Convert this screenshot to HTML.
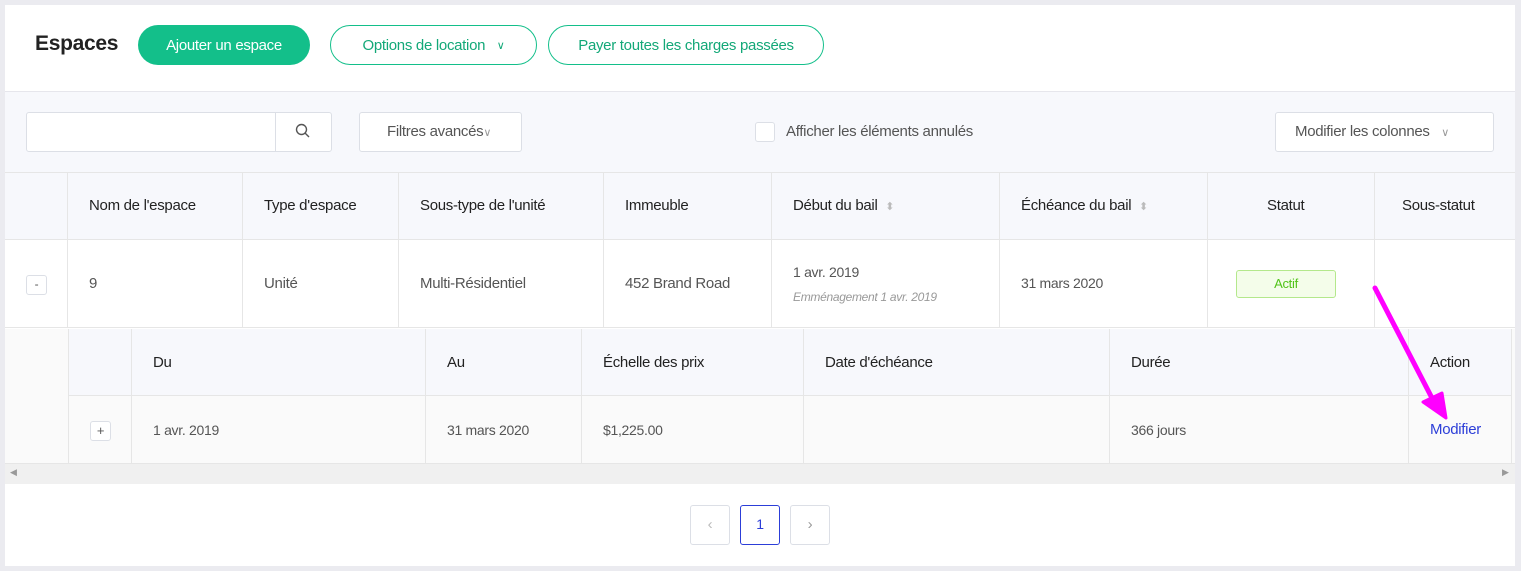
<!DOCTYPE html><html><head><meta charset="utf-8"><style>
*{box-sizing:border-box;margin:0;padding:0}
body{width:1521px;height:571px;background:#ebebf0;font-family:"Liberation Sans",sans-serif;position:relative;overflow:hidden;color:#333;font-size:15px;letter-spacing:-0.3px}
.a{position:absolute}
.card{left:5px;top:5px;width:1510px;height:561px;background:#fff}
.btn{position:absolute;height:40px;border-radius:20px;display:flex;align-items:center;justify-content:center;font-size:15px}
.gbtn{border:1px solid #13bf8a;color:#13a878;background:#fff}
.box{position:absolute;background:#fff;border:1px solid #dcdfe6;border-radius:3px}
.vl{position:absolute;width:1px;background:#e6e6e6}
.t{position:absolute;white-space:nowrap}
.h{color:#222;font-size:15px}
.c{color:#555;font-size:15px}
</style></head><body>
<div class="a card"></div>
<div class="t" style="left:35px;top:32px;font-size:21px;font-weight:bold;color:#222">Espaces</div>
<div class="btn" style="left:138px;top:25px;width:172px;background:#13bf8a;color:#fff">Ajouter un espace</div>
<div class="btn gbtn" style="left:330px;top:25px;width:207px">Options de location &nbsp;&nbsp;<span style="font-size:11px">∨</span></div>
<div class="btn gbtn" style="left:548px;top:25px;width:276px">Payer toutes les charges passées</div>
<div class="a" style="left:5px;top:91px;width:1510px;height:82px;background:#f7f8fc;border-top:1px solid #e6e6ec"></div>
<div class="box" style="left:26px;top:112px;width:250px;height:40px;border-radius:3px 0 0 3px"></div>
<div class="box" style="left:275px;top:112px;width:57px;height:40px;border-radius:0 3px 3px 0"></div>
<svg class="a" style="left:295px;top:123px" width="16" height="16"><circle cx="6.5" cy="6.5" r="5" fill="none" stroke="#555" stroke-width="1.4"/><line x1="10" y1="10" x2="14" y2="14" stroke="#555" stroke-width="1.4"/></svg>
<div class="box" style="left:359px;top:112px;width:163px;height:40px"></div>
<div class="t c" style="left:387px;top:123px">Filtres avancés<span style="font-size:11px;color:#999">∨</span></div>
<div class="box" style="left:755px;top:122px;width:20px;height:20px"></div>
<div class="t c" style="left:786px;top:123px">Afficher les éléments annulés</div>
<div class="box" style="left:1275px;top:112px;width:219px;height:40px"></div>
<div class="t c" style="left:1295px;top:123px">Modifier les colonnes &nbsp;&nbsp;<span style="font-size:11px;color:#999">∨</span></div>
<div class="a" style="left:5px;top:172px;width:1510px;height:68px;background:#f7f8fc;border-top:1px solid #e6e6e6;border-bottom:1px solid #e6e6e6"></div>
<div class="a" style="left:5px;top:240px;width:1510px;height:88px;background:#fff;border-bottom:1px solid #e6e6e6"></div>
<div class="vl" style="left:67px;top:172px;height:156px"></div>
<div class="vl" style="left:242px;top:172px;height:156px"></div>
<div class="vl" style="left:398px;top:172px;height:156px"></div>
<div class="vl" style="left:603px;top:172px;height:156px"></div>
<div class="vl" style="left:771px;top:172px;height:156px"></div>
<div class="vl" style="left:999px;top:172px;height:156px"></div>
<div class="vl" style="left:1207px;top:172px;height:156px"></div>
<div class="vl" style="left:1374px;top:172px;height:156px"></div>
<div class="t h" style="left:89px;top:197px">Nom de l'espace</div>
<div class="t h" style="left:264px;top:197px">Type d'espace</div>
<div class="t h" style="left:420px;top:197px">Sous-type de l'unité</div>
<div class="t h" style="left:625px;top:197px">Immeuble</div>
<div class="t h" style="left:793px;top:197px">Début du bail &nbsp;<span style="color:#bbb;font-size:11px">⬍</span></div>
<div class="t h" style="left:1021px;top:197px">Échéance du bail &nbsp;<span style="color:#bbb;font-size:11px">⬍</span></div>
<div class="t h" style="left:1267px;top:197px">Statut</div>
<div class="t h" style="left:1402px;top:197px">Sous-statut</div>
<div class="box" style="left:26px;top:275px;width:21px;height:20px;font-size:12px;text-align:center;line-height:17px;color:#555">-</div>
<div class="t c" style="left:89px;top:275px">9</div>
<div class="t c" style="left:264px;top:275px">Unité</div>
<div class="t c" style="left:420px;top:275px">Multi-Résidentiel</div>
<div class="t c" style="left:625px;top:275px">452 Brand Road</div>
<div class="t c" style="left:793px;top:264px;font-size:14px">1 avr. 2019</div>
<div class="t" style="left:793px;top:290px;font-size:12px;font-style:italic;color:#999">Emménagement 1 avr. 2019</div>
<div class="t c" style="left:1021px;top:275px;font-size:14px">31 mars 2020</div>
<div class="a" style="left:1236px;top:270px;width:100px;height:28px;background:#f4fdea;border:1px solid #b4e88c;border-radius:3px;color:#52c41a;font-size:13px;text-align:center;line-height:26px">Actif</div>
<div class="a" style="left:5px;top:329px;width:1510px;height:134px;background:#fafafa"></div>
<div class="a" style="left:68px;top:329px;width:1444px;height:67px;background:#f7f8fc;border-left:1px solid #e6e6e6;border-bottom:1px solid #e6e6e6"></div>
<div class="a" style="left:68px;top:396px;width:1444px;height:67px;border-left:1px solid #e6e6e6;border-right:1px solid #e6e6e6"></div>
<div class="vl" style="left:131px;top:329px;height:134px"></div>
<div class="vl" style="left:425px;top:329px;height:134px"></div>
<div class="vl" style="left:581px;top:329px;height:134px"></div>
<div class="vl" style="left:803px;top:329px;height:134px"></div>
<div class="vl" style="left:1109px;top:329px;height:134px"></div>
<div class="vl" style="left:1408px;top:329px;height:134px"></div>
<div class="vl" style="left:1511px;top:329px;height:134px"></div>
<div class="t h" style="left:153px;top:354px">Du</div>
<div class="t h" style="left:447px;top:354px">Au</div>
<div class="t h" style="left:603px;top:354px">Échelle des prix</div>
<div class="t h" style="left:825px;top:354px">Date d'échéance</div>
<div class="t h" style="left:1131px;top:354px">Durée</div>
<div class="t h" style="left:1430px;top:354px">Action</div>
<div class="box" style="left:90px;top:421px;width:21px;height:20px;font-size:13px;text-align:center;line-height:17px;color:#555">+</div>
<div class="t c" style="left:153px;top:422px;font-size:14px">1 avr. 2019</div>
<div class="t c" style="left:447px;top:422px;font-size:14px">31 mars 2020</div>
<div class="t c" style="left:603px;top:422px;font-size:14px">$1,225.00</div>
<div class="t c" style="left:1131px;top:422px;font-size:14px">366 jours</div>
<div class="t" style="left:1430px;top:421px;color:#2c3ed8;font-size:15px">Modifier</div>
<div class="a" style="left:5px;top:463px;width:1510px;height:21px;background:#f0f0f0;border-top:1px solid #e6e6e6"></div>
<div class="t" style="left:10px;top:467px;font-size:9px;color:#999">◀</div>
<div class="t" style="left:1502px;top:467px;font-size:9px;color:#999">▶</div>
<div class="box" style="left:690px;top:505px;width:40px;height:40px;color:#bbb;text-align:center;line-height:37px">‹</div>
<div class="box" style="left:740px;top:505px;width:40px;height:40px;border-color:#2c3ed8;color:#2c3ed8;text-align:center;line-height:37px;font-size:14px">1</div>
<div class="box" style="left:790px;top:505px;width:40px;height:40px;color:#999;text-align:center;line-height:37px">›</div>
<svg class="a" style="left:0;top:0" width="1521" height="571"><line x1="1375" y1="288" x2="1433" y2="400" stroke="#ff00ff" stroke-width="5" stroke-linecap="round"/><polygon points="1446,418 1423,402 1442,393" fill="#ff00ff" stroke="#ff00ff" stroke-width="3" stroke-linejoin="round"/></svg>
</body></html>
